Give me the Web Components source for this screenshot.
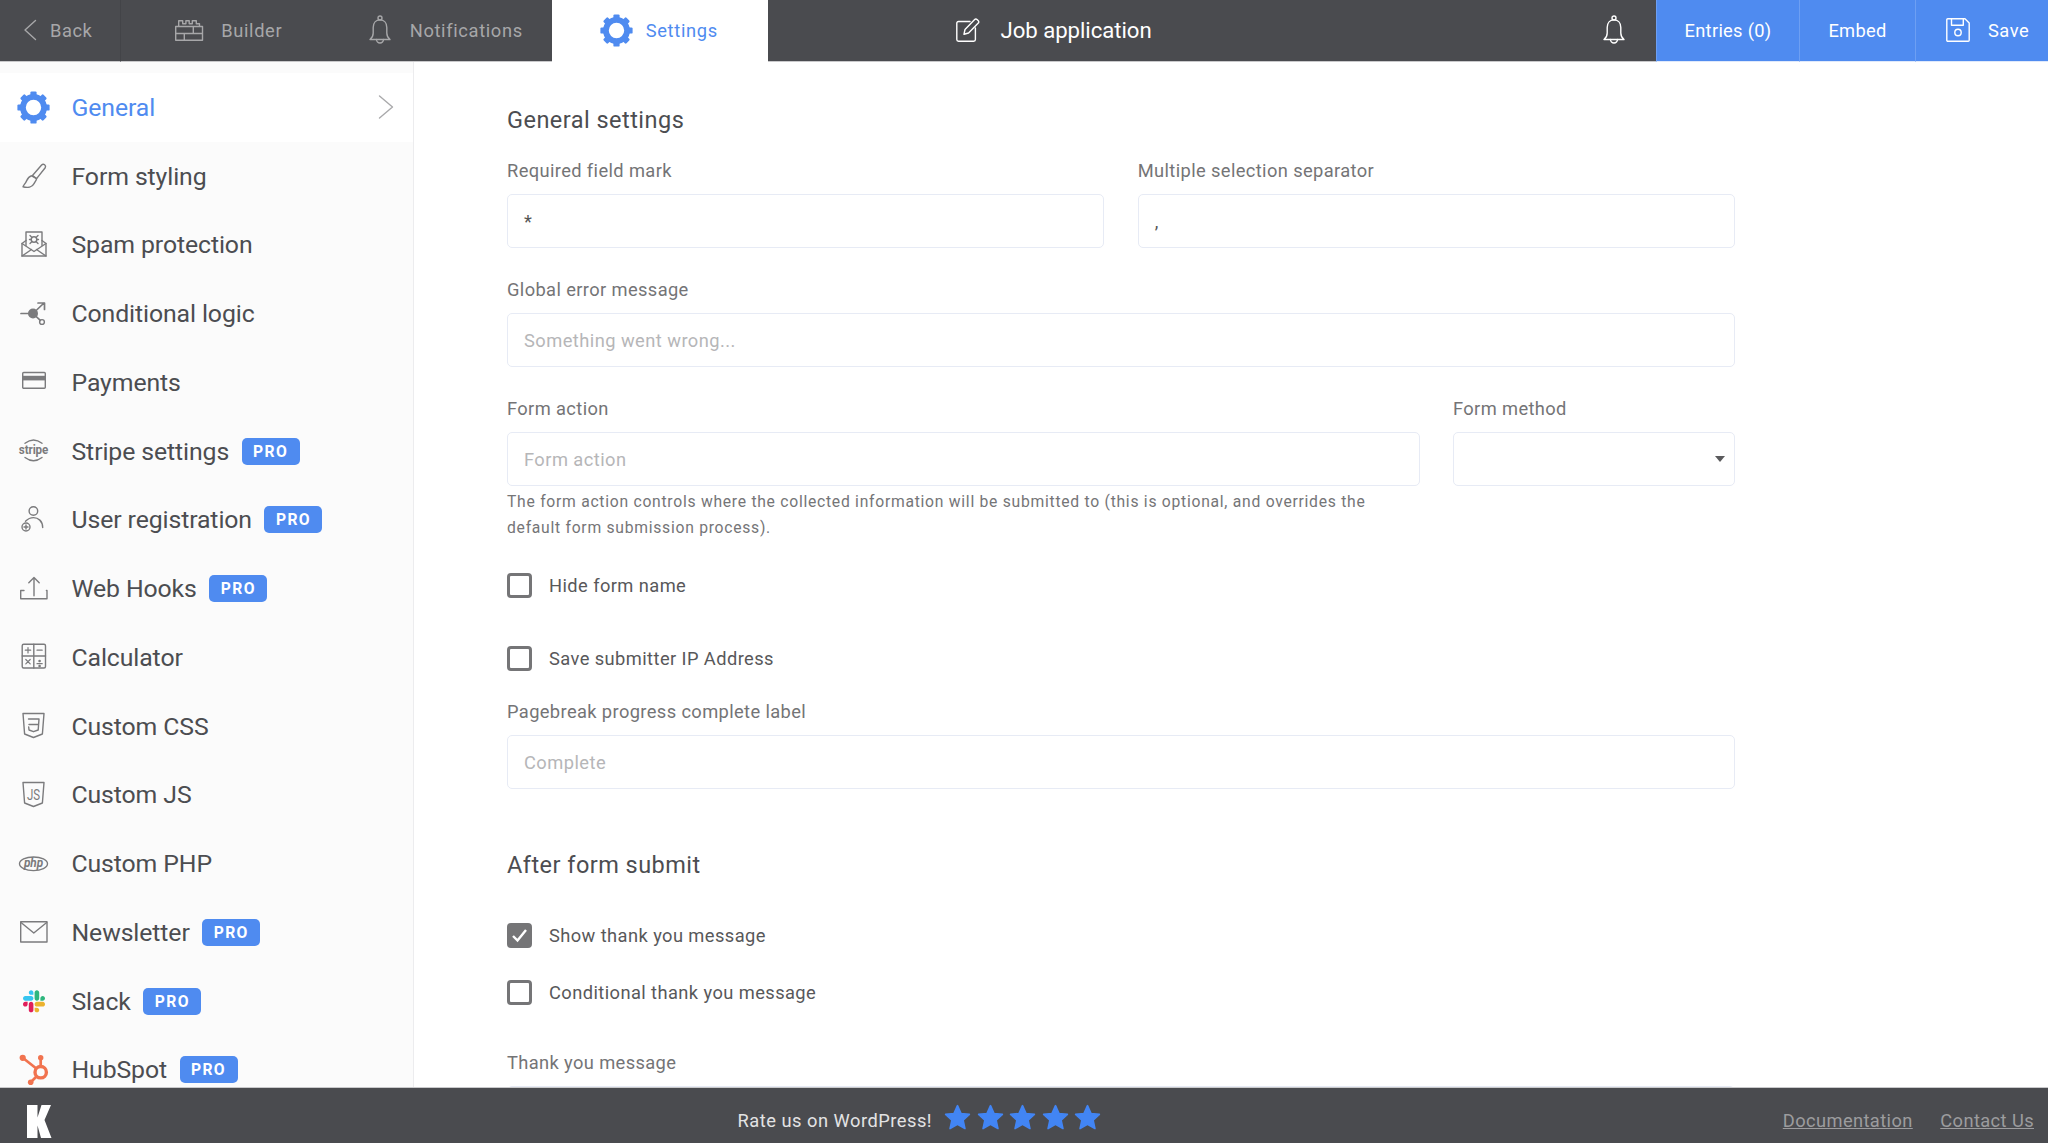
<!DOCTYPE html>
<html lang="en">
<head>
<meta charset="utf-8">
<title>Job application settings</title>
<style>
  html, body { margin: 0; height: 100%; }
  body { display: flex; flex-direction: column; height: 100vh; overflow: hidden; background: #fff; font-family: Roboto, "Liberation Sans", sans-serif; }
</style>
</head>
<body>
<app-topbar></app-topbar>
<app-body>
  <side-nav slot="nav">
    <nav-item icon="gear" active>General</nav-item>
    <nav-item icon="brush">Form styling</nav-item>
    <nav-item icon="spam">Spam protection</nav-item>
    <nav-item icon="logic">Conditional logic</nav-item>
    <nav-item icon="card">Payments</nav-item>
    <nav-item icon="stripe" pro>Stripe settings</nav-item>
    <nav-item icon="user" pro>User registration</nav-item>
    <nav-item icon="upload" pro>Web Hooks</nav-item>
    <nav-item icon="calc">Calculator</nav-item>
    <nav-item icon="css">Custom CSS</nav-item>
    <nav-item icon="js">Custom JS</nav-item>
    <nav-item icon="php">Custom PHP</nav-item>
    <nav-item icon="mail" pro>Newsletter</nav-item>
    <nav-item icon="slack" pro>Slack</nav-item>
    <nav-item icon="hubspot" pro>HubSpot</nav-item>
  </side-nav>
  <settings-panel>
    <section-title style="margin-bottom:23px">General settings</section-title>
    <form-row cols="1fr 1fr" style="margin-bottom:30px">
      <form-field value="*">Required field mark</form-field>
      <form-field value=",">Multiple selection separator</form-field>
    </form-row>
    <form-row cols="1fr" style="margin-bottom:30px">
      <form-field placeholder="Something went wrong...">Global error message</form-field>
    </form-row>
    <form-row cols="1fr 282px" style="margin-bottom:32px">
      <form-field placeholder="Form action">Form action<span slot="help">The form action controls where the collected information will be submitted to (this is optional, and overrides the default form submission process).</span></form-field>
      <form-field select>Form method</form-field>
    </form-row>
    <check-row style="margin-bottom:48px">Hide form name</check-row>
    <check-row style="margin-bottom:29px">Save submitter IP Address</check-row>
    <form-row cols="1fr" style="margin-bottom:60px">
      <form-field placeholder="Complete">Pagebreak progress complete label</form-field>
    </form-row>
    <section-title style="margin-bottom:42px">After form submit</section-title>
    <check-row checked style="margin-bottom:32px">Show thank you message</check-row>
    <check-row style="margin-bottom:46px">Conditional thank you message</check-row>
    <form-row cols="1fr">
      <form-field>Thank you message</form-field>
    </form-row>
  </settings-panel>
</app-body>
<app-footer></app-footer>

<script>
const S = 'fill="none" stroke="currentColor" stroke-width="1.4" stroke-linejoin="round" stroke-linecap="round"';
function gear(size) {
  let teeth = '';
  for (let a = 0; a < 360; a += 45) {
    teeth += `<rect x="13.4" y="0.4" width="6.2" height="6.6" rx="1.2" transform="rotate(${a} 16.5 16.5)"/>`;
  }
  return `<svg viewBox="0 0 33 33" width="${size}" height="${size}" fill="currentColor">${teeth}<circle cx="16.5" cy="16.5" r="10.6" fill="none" stroke="currentColor" stroke-width="5.8"/></svg>`;
}
const T = 'font-family="Roboto, Liberation Sans, sans-serif" fill="currentColor" text-anchor="middle"';
const ICONS = {
  gear: () => gear(33),
  brush: () => `<svg viewBox="0 0 32 32" ${S}><path d="M14.5 15.5 23.6 5a2.3 2.3 0 0 1 3.6 2.8L18.6 18.6z"/><path d="M13.6 15.8c-4 1-4.4 4.3-5.8 6.6C6.8 24 5 25.800 5 26.800c4.500 1.200 9.400.4 11.200-3.400.8-1.700 2.200-3 2.400-4.800z"/></svg>`,
  spam: () => `<svg viewBox="0 0 32 32" ${S}><path d="M8 16.500V3h16v13.500"/><path d="M8 11.500 4 14.500V27h24V14.500L24 11.500"/><path d="M4 14.500 16 22.500l12-8M4 27l9.500-6.500M28 27l-9.500-6.500"/><circle cx="16" cy="10.500" r="2.800"/><path d="M12 6.500l2 2M20 6.500l-2 2M11.500 10.500h1.700M20.500 10.500h-1.700M12 14.500l2-2M20 14.500l-2-2"/></svg>`,
  logic: () => `<svg viewBox="0 0 32 32" ${S}><path d="M3 15.500h8M15 15.500 26 5M20 5h6.500v6.500M15 15.500l7.300 6.800" stroke-width="1.7"/><circle cx="15" cy="15.500" r="5" fill="currentColor" stroke="none"/><circle cx="24" cy="24" r="2.400"/></svg>`,
  card: () => `<svg viewBox="0 0 32 32" ${S}><rect x="4.700" y="6.500" width="22.600" height="15.800" rx="1"/><rect x="4.700" y="9.800" width="22.600" height="4.600" fill="currentColor" stroke="none"/></svg>`,
  stripe: () => `<svg viewBox="0 0 32 32" ${S}><path d="M7 8.300Q15.500 1.600 24 8.300M7 22.500Q15.500 29 24 22.500"/><text x="15.500" y="19.300" font-size="12.500" font-weight="700" stroke="none" textLength="29.500" lengthAdjust="spacingAndGlyphs" ${T}>stripe</text></svg>`,
  user: () => `<svg viewBox="0 0 32 32" ${S}><circle cx="15.400" cy="7" r="4.300"/><path d="M7.500 17.300C10 14.700 13 13.600 15.500 13.600c4.600 0 9.200 3.400 9.200 10"/><circle cx="8" cy="23" r="4"/><path d="M8 21v4M6 23h4"/></svg>`,
  upload: () => `<svg viewBox="0 0 32 32" ${S}><path d="M6 17.500H2.700v8.300h26.300v-8.300h-.6"/><path d="M16 22.700V4.500M10.800 9.700 16 4.500l5.200 5.200"/></svg>`,
  calc: () => `<svg viewBox="0 0 32 32" ${S}><rect x="4.200" y="3.200" width="23.300" height="23.800" rx="1.500"/><path d="M15.800 3.200v23.800M4.200 15h23.300"/><path d="M10 6.500v5.400M7.300 9.200h5.400M19 9.200h5.200M7.800 18.500l4.400 4.400M12.200 18.500l-4.400 4.400M19 22.700h5.200" stroke-width="1.200"/><circle cx="21.600" cy="20" r=".6"/><circle cx="21.600" cy="25" r=".6"/></svg>`,
  css: () => `<svg viewBox="0 0 32 32" ${S}><path d="M5 3.500h21l-1.600 20.500-8.900 3.500-8.900-3.500z"/><path d="M10.500 9h10.500l-.8 11-4.700 1.700-4.500-1.700-.3-3M11 14.500h9.500"/></svg>`,
  js: () => `<svg viewBox="0 0 32 32" ${S}><path d="M5 3.500h21l-1.600 20.500-8.900 3.500-8.900-3.500z"/><text x="15.500" y="20.500" font-size="14" font-weight="400" stroke="none" textLength="13" lengthAdjust="spacingAndGlyphs" ${T}>JS</text></svg>`,
  php: () => `<svg viewBox="0 0 32 32" ${S}><ellipse cx="15.500" cy="15.800" rx="14" ry="6.800"/><text x="15.500" y="19.300" font-size="12" font-style="italic" font-weight="700" stroke="none" textLength="19" lengthAdjust="spacingAndGlyphs" ${T}>php</text></svg>`,
  mail: () => `<svg viewBox="0 0 32 32" ${S}><rect x="2.700" y="5.700" width="26.300" height="20.300"/><path d="M3 6.500 15.800 17 28.700 6.500"/></svg>`,
  slack: () => `<svg viewBox="0 0 32 32"><g transform="translate(5 5.250) scale(.1792)"><path fill="#e01e5a" d="M25.800 77.600c0 7.100-5.800 12.900-12.900 12.900S0 84.700 0 77.600s5.800-12.900 12.900-12.900h12.900v12.900zM32.300 77.600c0-7.100 5.800-12.900 12.900-12.900s12.900 5.800 12.900 12.900v32.300c0 7.100-5.800 12.900-12.900 12.900s-12.900-5.800-12.900-12.900V77.600z"/><path fill="#36c5f0" d="M45.200 25.800c-7.100 0-12.900-5.800-12.900-12.900S38.100 0 45.200 0s12.900 5.800 12.900 12.900v12.900H45.200zM45.200 32.300c7.100 0 12.900 5.800 12.900 12.900s-5.800 12.900-12.900 12.900H12.900C5.800 58.100 0 52.300 0 45.200s5.800-12.900 12.900-12.900h32.300z"/><path fill="#2eb67d" d="M97 45.200c0-7.100 5.800-12.900 12.900-12.900s12.900 5.800 12.900 12.900-5.800 12.900-12.900 12.900H97V45.200zM90.500 45.200c0 7.100-5.800 12.900-12.900 12.900s-12.900-5.800-12.900-12.900V12.900C64.700 5.800 70.500 0 77.600 0s12.900 5.800 12.900 12.900v32.300z"/><path fill="#ecb22e" d="M77.600 97c7.100 0 12.900 5.800 12.900 12.900s-5.800 12.900-12.900 12.900-12.900-5.800-12.900-12.900V97h12.900zM77.600 90.500c-7.100 0-12.900-5.800-12.900-12.900s5.800-12.900 12.900-12.900h32.300c7.100 0 12.900 5.800 12.900 12.900s-5.800 12.900-12.900 12.900H77.600z"/></g></svg>`,
  hubspot: () => `<svg viewBox="0 0 32 32"><g fill="none" stroke="#f1734f" stroke-width="2.700" stroke-linecap="round"><path d="M22.700 4v8M4.700 3.800 18 14.300M12.700 28.200 18.500 22.500"/><circle cx="22.700" cy="18.200" r="5.700" stroke-width="3.400"/></g><g fill="#f1734f"><circle cx="22.700" cy="3.800" r="2.700"/><circle cx="4.700" cy="3.800" r="3.100"/><circle cx="12.700" cy="28.200" r="2.800"/></g></svg>`,
  back: () => `<svg viewBox="0 0 14 22" ${S} stroke-width="2.700"><path d="M12.500 1.500 2 11l10.500 9.500"/></svg>`,
  chevron: () => `<svg viewBox="0 0 16 24" ${S} stroke-width="1.800"><path d="M1.500 1 14.500 12 1.500 23"/></svg>`,
  builder: () => `<svg viewBox="0 0 28 22" ${S} stroke-width="1.300"><path d="M.7 21.300V7.500h3V1.700h4v3h3.200v-3h3.300v3h3.100v-3h4v3h3.200v2.800h3v13.800zM.7 7.500h26.600M.7 14.500h26.600M9.300 14.500v6.800M18.300 7.500v7"/></svg>`,
  bell: () => `<svg viewBox="0 0 24 30" ${S} stroke-width="1.500"><path d="M2 24.500c2.500-2 3.200-3.500 3.200-6.500v-5.500C5.200 8 8 4.900 12 4.900s6.800 3.100 6.800 7.600V18c0 3 .7 4.500 3.200 6.500z"/><circle cx="12" cy="3" r="2"/><path d="M8.500 24.500a3.500 3.500 0 0 0 7 0"/></svg>`,
  edit: () => `<svg viewBox="0 0 26 24" ${S} stroke-width="1.500"><path d="M14 3.500H2.500a1.700 1.700 0 0 0-1.700 1.700v16.300A1.700 1.700 0 0 0 2.500 23.200h15.200a1.700 1.700 0 0 0 1.700-1.700V10"/><path d="M8 16.200 9 11.500 18.700 1.500a1.600 1.600 0 0 1 2.300 0l1.300 1.300a1.600 1.600 0 0 1 0 2.300L12.600 15z"/></svg>`,
  save: () => `<svg viewBox="0 0 24 24" ${S} stroke-width="1.500"><path d="M.8 1.800A1 1 0 0 1 1.800.8h17.200l4.200 4.200v17.200a1 1 0 0 1-1 1H1.800a1 1 0 0 1-1-1z"/><path d="M5.500.8v6.500h11.800V.8"/><circle cx="12" cy="14.500" r="3.200"/></svg>`
};
class BaseEl extends HTMLElement {
  render(html) {
    if (!this.shadowRoot) this.attachShadow({ mode: 'open' });
    this.shadowRoot.innerHTML = html;
  }
}
class KIcon extends BaseEl {
  connectedCallback() {
    const n = this.getAttribute('name');
    this.render(`<style>:host{display:inline-flex;align-items:center;justify-content:center;flex:none;width:32px;height:32px;color:#7b7b7d}
      svg{display:block;overflow:visible;width:100%;height:100%}
      </style>${ICONS[n]()}`);
  }
}
class TopTab extends BaseEl {
  connectedCallback() {
    const active = this.hasAttribute('active');
    this.render(`<style>
      :host{display:flex;align-items:center;justify-content:center;gap:var(--tab-gap,18px);width:215.5px;height:62px;box-sizing:border-box;color:#a7a7a9;font-size:18.3px;letter-spacing:.65px;padding-bottom:1px;padding-left:var(--tab-nudge,0px);${active ? 'background:#fff;color:#4f8bf0;padding-bottom:2px;padding-right:2px;' : 'border-bottom:1px solid #c9c9cb;'}}
      </style><slot name="icon"></slot><slot></slot>`);
  }
}
class BlueBtn extends BaseEl {
  connectedCallback() {
    this.render(`<style>
      :host{display:flex;align-items:center;justify-content:var(--btn-justify,center);gap:18px;height:62px;box-sizing:border-box;padding-bottom:1px;padding-left:var(--btn-pad,0px);background:#4f8bf0;color:#fff;font-size:18.3px;letter-spacing:var(--btn-ls,.3px);border-left:1px solid #6d9ff3;border-bottom:1px solid #dfe9fb}
      </style><slot name="icon"></slot><slot></slot>`);
  }
}
class AppTopbar extends BaseEl {
  connectedCallback() {
    this.render(`<style>
      :host{display:flex;flex:none;height:62px;background:#4a4b4f;color:#fff;position:relative;z-index:2}
      .back{display:flex;align-items:center;gap:13px;width:121px;box-sizing:border-box;padding-left:23px;padding-bottom:1px;border-right:1px solid #434448;border-bottom:1px solid #c9c9cb;color:#a7a7a9;font-size:18.3px;letter-spacing:.55px}
      .back k-icon{width:14px;height:22px;color:#a7a7a9}
      .mid{flex:1;display:flex;align-items:center;padding-left:188px;padding-right:30px;padding-bottom:1px;border-bottom:1px solid #c9c9cb}
      .title{display:flex;align-items:center;gap:19px;font-size:22.2px;letter-spacing:-.05px;color:#fff}
      .title k-icon{width:26px;height:24px;color:#fff}
      .bell{margin-left:auto;width:24px;height:30px;color:#fff}
      .ic-b{width:28px;height:22px;color:#a7a7a9}
      .ic-n{width:24px;height:30px;color:#a7a7a9}
      .ic-g{width:33px;height:33px;color:#4f8bf0}
      .ic-s{width:24px;height:24px;color:#fff}
      .e{width:143px}.m{width:116px}.s{width:133px;--btn-justify:flex-start;--btn-pad:30px;--btn-ls:.5px}
      </style>
      <div class="back"><k-icon name="back"></k-icon><span>Back</span></div>
      <top-tab><k-icon slot="icon" class="ic-b" name="builder"></k-icon>Builder</top-tab>
      <top-tab style="--tab-nudge:2px"><k-icon slot="icon" class="ic-n" name="bell"></k-icon>Notifications</top-tab>
      <top-tab active style="--tab-gap:13px"><k-icon slot="icon" class="ic-g" name="gear"></k-icon>Settings</top-tab>
      <div class="mid"><div class="title"><k-icon name="edit"></k-icon><span>Job application</span></div><k-icon class="bell" name="bell"></k-icon></div>
      <blue-btn class="e">Entries (0)</blue-btn>
      <blue-btn class="m">Embed</blue-btn>
      <blue-btn class="s"><k-icon slot="icon" class="ic-s" name="save"></k-icon>Save</blue-btn>`);
  }
}
class AppBody extends BaseEl {
  connectedCallback() {
    this.render(`<style>:host{display:flex;flex:1;min-height:0;overflow:hidden}</style><slot name="nav"></slot><slot></slot>`);
  }
}
class SideNav extends BaseEl {
  connectedCallback() {
    this.render(`<style>:host{display:block;flex:none;width:414px;box-sizing:border-box;padding-top:11px;background:#fbfbfb;border-right:1.5px solid #ececee;overflow:hidden}</style><slot></slot>`);
  }
}
class NavItem extends BaseEl {
  connectedCallback() {
    const active = this.hasAttribute('active');
    const pro = this.hasAttribute('pro');
    const icon = this.getAttribute('icon');
    this.render(`<style>
      :host{display:flex;align-items:center;height:68.75px;box-sizing:border-box;padding-left:18px;color:#4c4d51;font-size:24.8px;letter-spacing:-.1px;${active ? 'background:#fff;color:#4f8bf0;' : ''}}
      .t{margin-left:21.500px}
      k-icon{${active ? 'color:#4f8bf0;width:33px;height:33px;margin:0 .5px 0 -1.500px;' : ''}}
      pro-badge{margin-left:12.500px}
      .chev{margin:0 19px 0 auto;width:16px;height:24px;color:#a9a9ab}
      </style><k-icon name="${icon}"></k-icon><span class="t"><slot></slot></span>${pro ? '<pro-badge>PRO</pro-badge>' : ''}${active ? '<k-icon class="chev" name="chevron"></k-icon>' : ''}`);
  }
}
class ProBadge extends BaseEl {
  connectedCallback() {
    this.render(`<style>:host{display:inline-flex;align-items:center;justify-content:center;flex:none;width:58px;height:27px;border-radius:5px;background:#4f8bf0;color:#fff;font-size:15.7px;font-weight:700;letter-spacing:1.35px}</style><slot></slot>`);
  }
}
class SettingsPanel extends BaseEl {
  connectedCallback() {
    this.render(`<style>:host{display:block;flex:none;width:1228px;margin-left:93px;padding-top:42px;box-sizing:content-box}</style><slot></slot>`);
  }
}
class SectionTitle extends BaseEl {
  connectedCallback() {
    this.render(`<style>:host{display:block;height:32px;line-height:32px;font-size:23.5px;color:#4c4d51;letter-spacing:.47px}</style><slot></slot>`);
  }
}
class FormRow extends BaseEl {
  connectedCallback() {
    this.render(`<style>:host{display:grid;grid-template-columns:${this.getAttribute('cols') || '1fr'};column-gap:33.500px;align-items:start}</style><slot></slot>`);
  }
}
class FormField extends BaseEl {
  connectedCallback() {
    const value = this.getAttribute('value');
    const ph = this.getAttribute('placeholder');
    const select = this.hasAttribute('select');
    const txt = value !== null ? `<span class="v">${value}</span>` : (ph ? `<span class="p">${ph}</span>` : '');
    this.render(`<style>
      :host{display:block;min-width:0}
      .l{height:24px;line-height:24px;margin-bottom:11px;font-size:18.3px;color:#747476;letter-spacing:.38px}
      .b{display:flex;align-items:center;height:54px;box-sizing:border-box;padding:0 16px;background:#fff;border:1.5px solid #e7ebf5;border-radius:5px;font-size:18.3px;letter-spacing:.45px}
      .v{color:#555}.p{color:#b6b6b8}
      .tri{margin-left:auto;margin-right:-6.500px;width:0;height:0;border-left:5px solid transparent;border-right:5px solid transparent;border-top:6px solid #5a5a5c}
      ::slotted([slot=help]){display:block;margin-top:3px;line-height:26px;font-size:15.7px;color:#757577;letter-spacing:.73px}
      </style><div class="l"><slot></slot></div><div class="b">${txt}${select ? '<span class="tri"></span>' : ''}</div><slot name="help"></slot>`);
  }
}
class CheckRow extends BaseEl {
  connectedCallback() {
    const on = this.hasAttribute('checked');
    this.render(`<style>
      :host{display:flex;align-items:center;gap:17px;height:25px;font-size:18.3px;color:#58585a;letter-spacing:.42px}
      .c{flex:none;width:25px;height:25px;box-sizing:border-box;border:3px solid #757577;border-radius:4px;background:${on ? '#757577' : '#fff'};display:flex;align-items:center;justify-content:center}
      svg{width:17px;height:15px;display:block}
      </style><span class="c">${on ? '<svg viewBox="0 0 17 15"><path d="M2 8l4.500 4.500L15 2" fill="none" stroke="#fff" stroke-width="2.400"/></svg>' : ''}</span><span><slot></slot></span>`);
  }
}
class AppFooter extends BaseEl {
  connectedCallback() {
    const star = '<svg viewBox="0 0 25 24"><path d="M12.500 1.500l3.300 7.300 7.700.8-5.800 5.300 1.700 7.800-6.900-4-6.900 4 1.700-7.800L1.500 9.600l7.700-.8z" fill="#4285f4" stroke="#4285f4" stroke-width="1.500" stroke-linejoin="round"/></svg>';
    this.render(`<style>
      :host{display:flex;flex:none;align-items:center;height:56px;box-sizing:border-box;padding-top:9px;background:#4a4b4f;border-top:1px solid #c9c9cb;color:#e3e3e4;font-size:18.3px;position:relative;z-index:2}
      .logo{flex:none;width:24.500px;height:33px;margin:2px 0 0 27px}
      .rate{margin-left:686px;letter-spacing:.5px}
      .stars{display:flex;gap:5.500px;margin-left:12px;margin-top:-6px}
      .stars svg{display:block;width:27px;height:26px}
      .links{margin-left:auto;margin-right:14px;display:flex;gap:27.500px;color:#9c9c9e}
      .links span{text-decoration:underline;letter-spacing:.4px}
      </style><svg class="logo" viewBox="0 0 24.500 33" role="img" aria-label="Kali Forms logo"><polygon fill="#fff" points="0,0 10.500,0 10.500,12.500 14.500,0 24,0 17.500,15 24.500,33 14,33 10.500,20.500 10.500,33 0,33"/></svg><span class="rate">Rate us on WordPress!</span><div class="stars">${star.repeat(5)}</div><div class="links"><span>Documentation</span><span>Contact Us</span></div>`);
  }
}
const defs = {
  'k-icon': KIcon, 'top-tab': TopTab, 'blue-btn': BlueBtn, 'app-topbar': AppTopbar, 'app-body': AppBody,
  'side-nav': SideNav, 'nav-item': NavItem, 'pro-badge': ProBadge, 'settings-panel': SettingsPanel,
  'section-title': SectionTitle, 'form-row': FormRow, 'form-field': FormField, 'check-row': CheckRow, 'app-footer': AppFooter
};
for (const [name, cls] of Object.entries(defs)) customElements.define(name, cls);
</script>
</body>
</html>
